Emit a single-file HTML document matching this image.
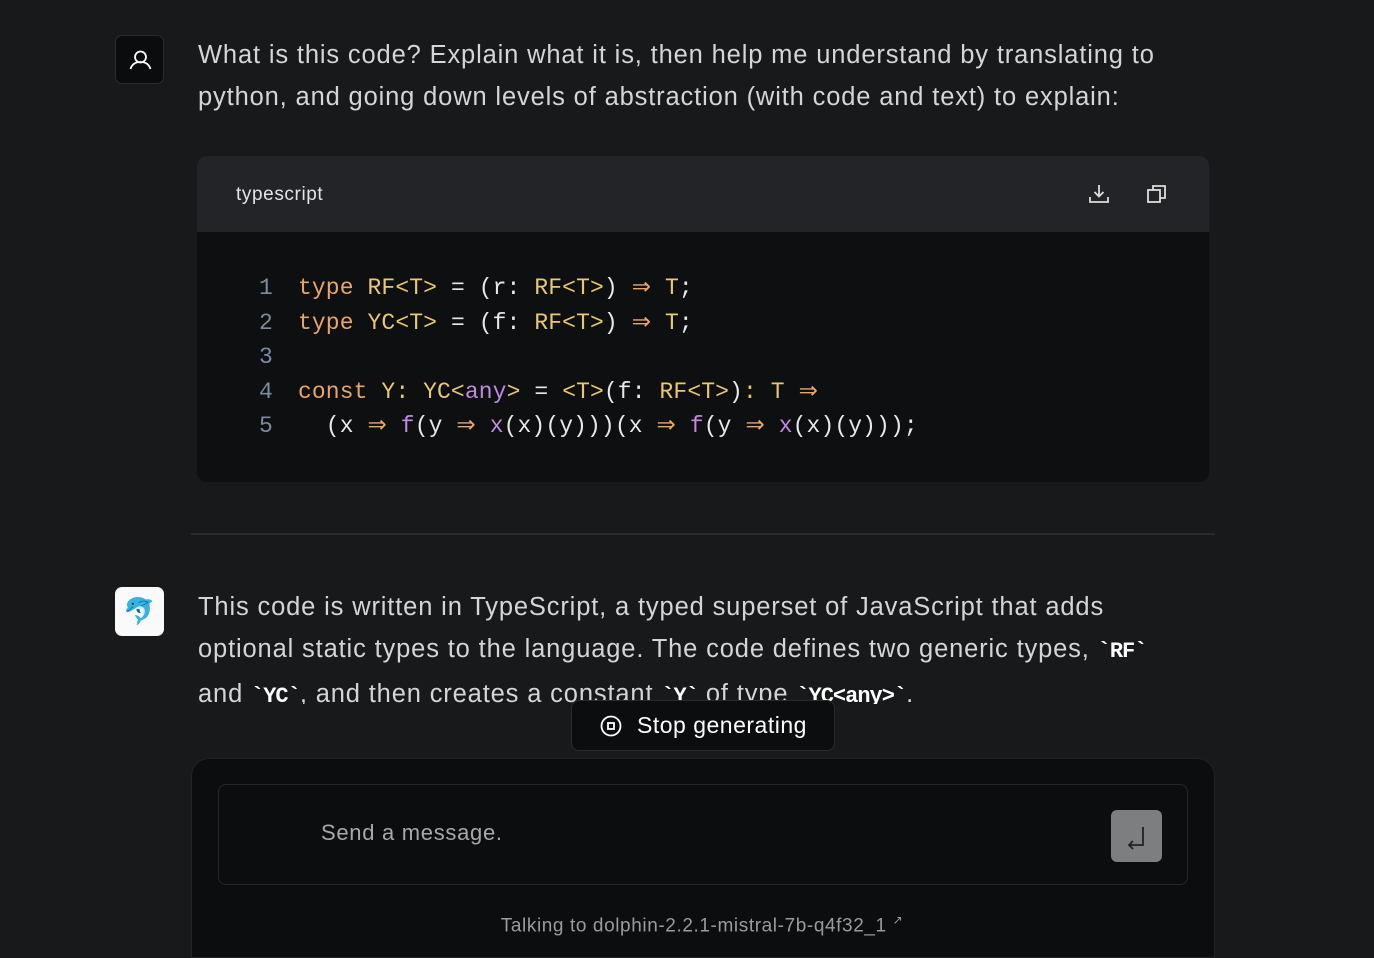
<!DOCTYPE html>
<html><head><meta charset="utf-8"><style>
*{box-sizing:border-box;margin:0;padding:0}
body{width:1374px;height:950px;overflow:hidden;background:#18191b;font-family:"Liberation Sans",sans-serif;color:#d4d5d8;position:relative}
.av{position:absolute;left:115px;width:49px;height:49px;border-radius:7px}
.t{position:absolute;left:198px;font-size:25.5px;letter-spacing:0.85px;line-height:42px;color:#d4d5d8;width:1000px}
.code{position:absolute;left:197px;top:156px;width:1012px;height:326px;border-radius:10px;overflow:hidden;background:#0e0f10}
.hd{height:76px;background:#232427;position:relative}
.hd span{position:absolute;left:39px;top:28px;font-size:19px;letter-spacing:0.6px;color:#e2e3e5}
pre{position:absolute;left:62px;top:115px;font-family:"Liberation Mono",monospace;font-size:23px;letter-spacing:0.1px;line-height:34.5px;color:#e8e8e8}
.n{color:#7b8ba0;display:inline-block;width:39px}
.k{color:#e7a56a}.y{color:#e8c872}.p{color:#c08ae0}.w{color:#e8e8e8}
b.c{font-family:"Liberation Mono",monospace;color:#fff;font-weight:bold;font-size:22px;letter-spacing:-1px}
</style></head><body>
<div class="av" style="top:35px;background:#0b0c0d;border:1px solid #2a2b2e">
<svg width="49" height="49" viewBox="0 0 49 49"><circle cx="24.5" cy="21" r="5.5" fill="none" stroke="#fff" stroke-width="1.8"/><path d="M14.5 33c1.5-5 5.5-7 10-7s8.5 2 10 7" fill="none" stroke="#fff" stroke-width="1.8"/></svg></div>
<div class="t" style="top:34px">What is this code? Explain what it is, then help me understand by translating to python, and going down levels of abstraction (with code and text) to explain:</div>
<div class="code"><div class="hd"><span>typescript</span>
<svg style="position:absolute;left:890px;top:26px" width="24" height="24" viewBox="0 0 24 24" fill="none" stroke="#ddd" stroke-width="1.8"><path d="M12 3v11M7.5 10l4.5 4.5 4.5-4.5M3 15v5h18v-5"/></svg>
<svg style="position:absolute;left:948px;top:26px" width="24" height="24" viewBox="0 0 24 24" fill="none" stroke="#ddd" stroke-width="1.8"><rect x="3" y="8" width="12" height="12"/><path d="M8 8V4h12v12h-5"/></svg>
</div>
<pre><span class="n">1</span><span class="k">type</span> <span class="y">RF&lt;T&gt;</span> <span class="w">=</span> (r: <span class="y">RF&lt;T&gt;</span>) <span class="k">⇒</span> <span class="y">T</span>;
<span class="n">2</span><span class="k">type</span> <span class="y">YC&lt;T&gt;</span> <span class="w">=</span> (f: <span class="y">RF&lt;T&gt;</span>) <span class="k">⇒</span> <span class="y">T</span>;
<span class="n">3</span>
<span class="n">4</span><span class="k">const</span> <span class="y">Y: YC&lt;</span><span class="p">any</span><span class="y">&gt;</span> = <span class="y">&lt;T&gt;</span>(f: <span class="y">RF&lt;T&gt;</span>)<span class="y">: T</span> <span class="k">⇒</span>
<span class="n">5</span>  (x <span class="k">⇒</span> <span class="p">f</span>(y <span class="k">⇒</span> <span class="p">x</span>(x)(y)))(x <span class="k">⇒</span> <span class="p">f</span>(y <span class="k">⇒</span> <span class="p">x</span>(x)(y)));</pre>
</div>
<div style="position:absolute;left:191px;top:533px;width:1024px;height:2px;background:#2a2b2e"></div>
<div class="av" style="top:587px;background:#fafafa;font-size:26px;text-align:center;line-height:49px">🐬</div>
<div class="t" style="top:586px;height:118px;overflow:hidden">This code is written in TypeScript, a typed superset of JavaScript that adds optional static types to the language. The code defines two generic types, <b class="c">`RF`</b> and <b class="c">`YC`</b>, and then creates a constant <b class="c">`Y`</b> of type <b class="c">`YC&lt;any&gt;`</b>.</div>
<div style="position:absolute;left:191px;top:758px;width:1024px;height:200px;background:#0c0d0f;border:1px solid #222;border-radius:18px 18px 0 0"></div>
<div style="position:absolute;left:218px;top:784px;width:970px;height:101px;border:1px solid #26272a;border-radius:8px;background:#0c0d0f"></div>
<div style="position:absolute;left:321px;top:820px;font-size:22px;letter-spacing:0.7px;color:#a7a8ab">Send a message.</div>
<div style="position:absolute;left:1111px;top:810px;width:51px;height:52px;border-radius:6px;background:#7d7e80">
<svg width="51" height="52" viewBox="0 0 51 52" fill="none" stroke="#222" stroke-width="1.8"><path d="M32 17v18H18M22 31l-4 4 4 4"/></svg></div>
<div style="position:absolute;left:0;width:1374px;top:913px;padding-left:30px;text-align:center;font-size:19px;letter-spacing:0.6px;color:#9a9b9e">Talking to dolphin-2.2.1-mistral-7b-q4f32_1 <sup style="font-size:12px">↗</sup></div>
<div style="position:absolute;left:571px;top:700px;width:264px;height:51px;background:#0c0d0f;border:1px solid #2a2b2e;border-radius:8px;font-size:23px;letter-spacing:0.5px;color:#fff;line-height:49px;padding-left:65px">Stop generating
<svg style="position:absolute;left:28px;top:14px" width="22" height="22" viewBox="0 0 22 22" fill="none" stroke="#fff" stroke-width="1.8"><circle cx="11" cy="11" r="9.5"/><rect x="8" y="8" width="6" height="6"/></svg></div>
</body></html>
